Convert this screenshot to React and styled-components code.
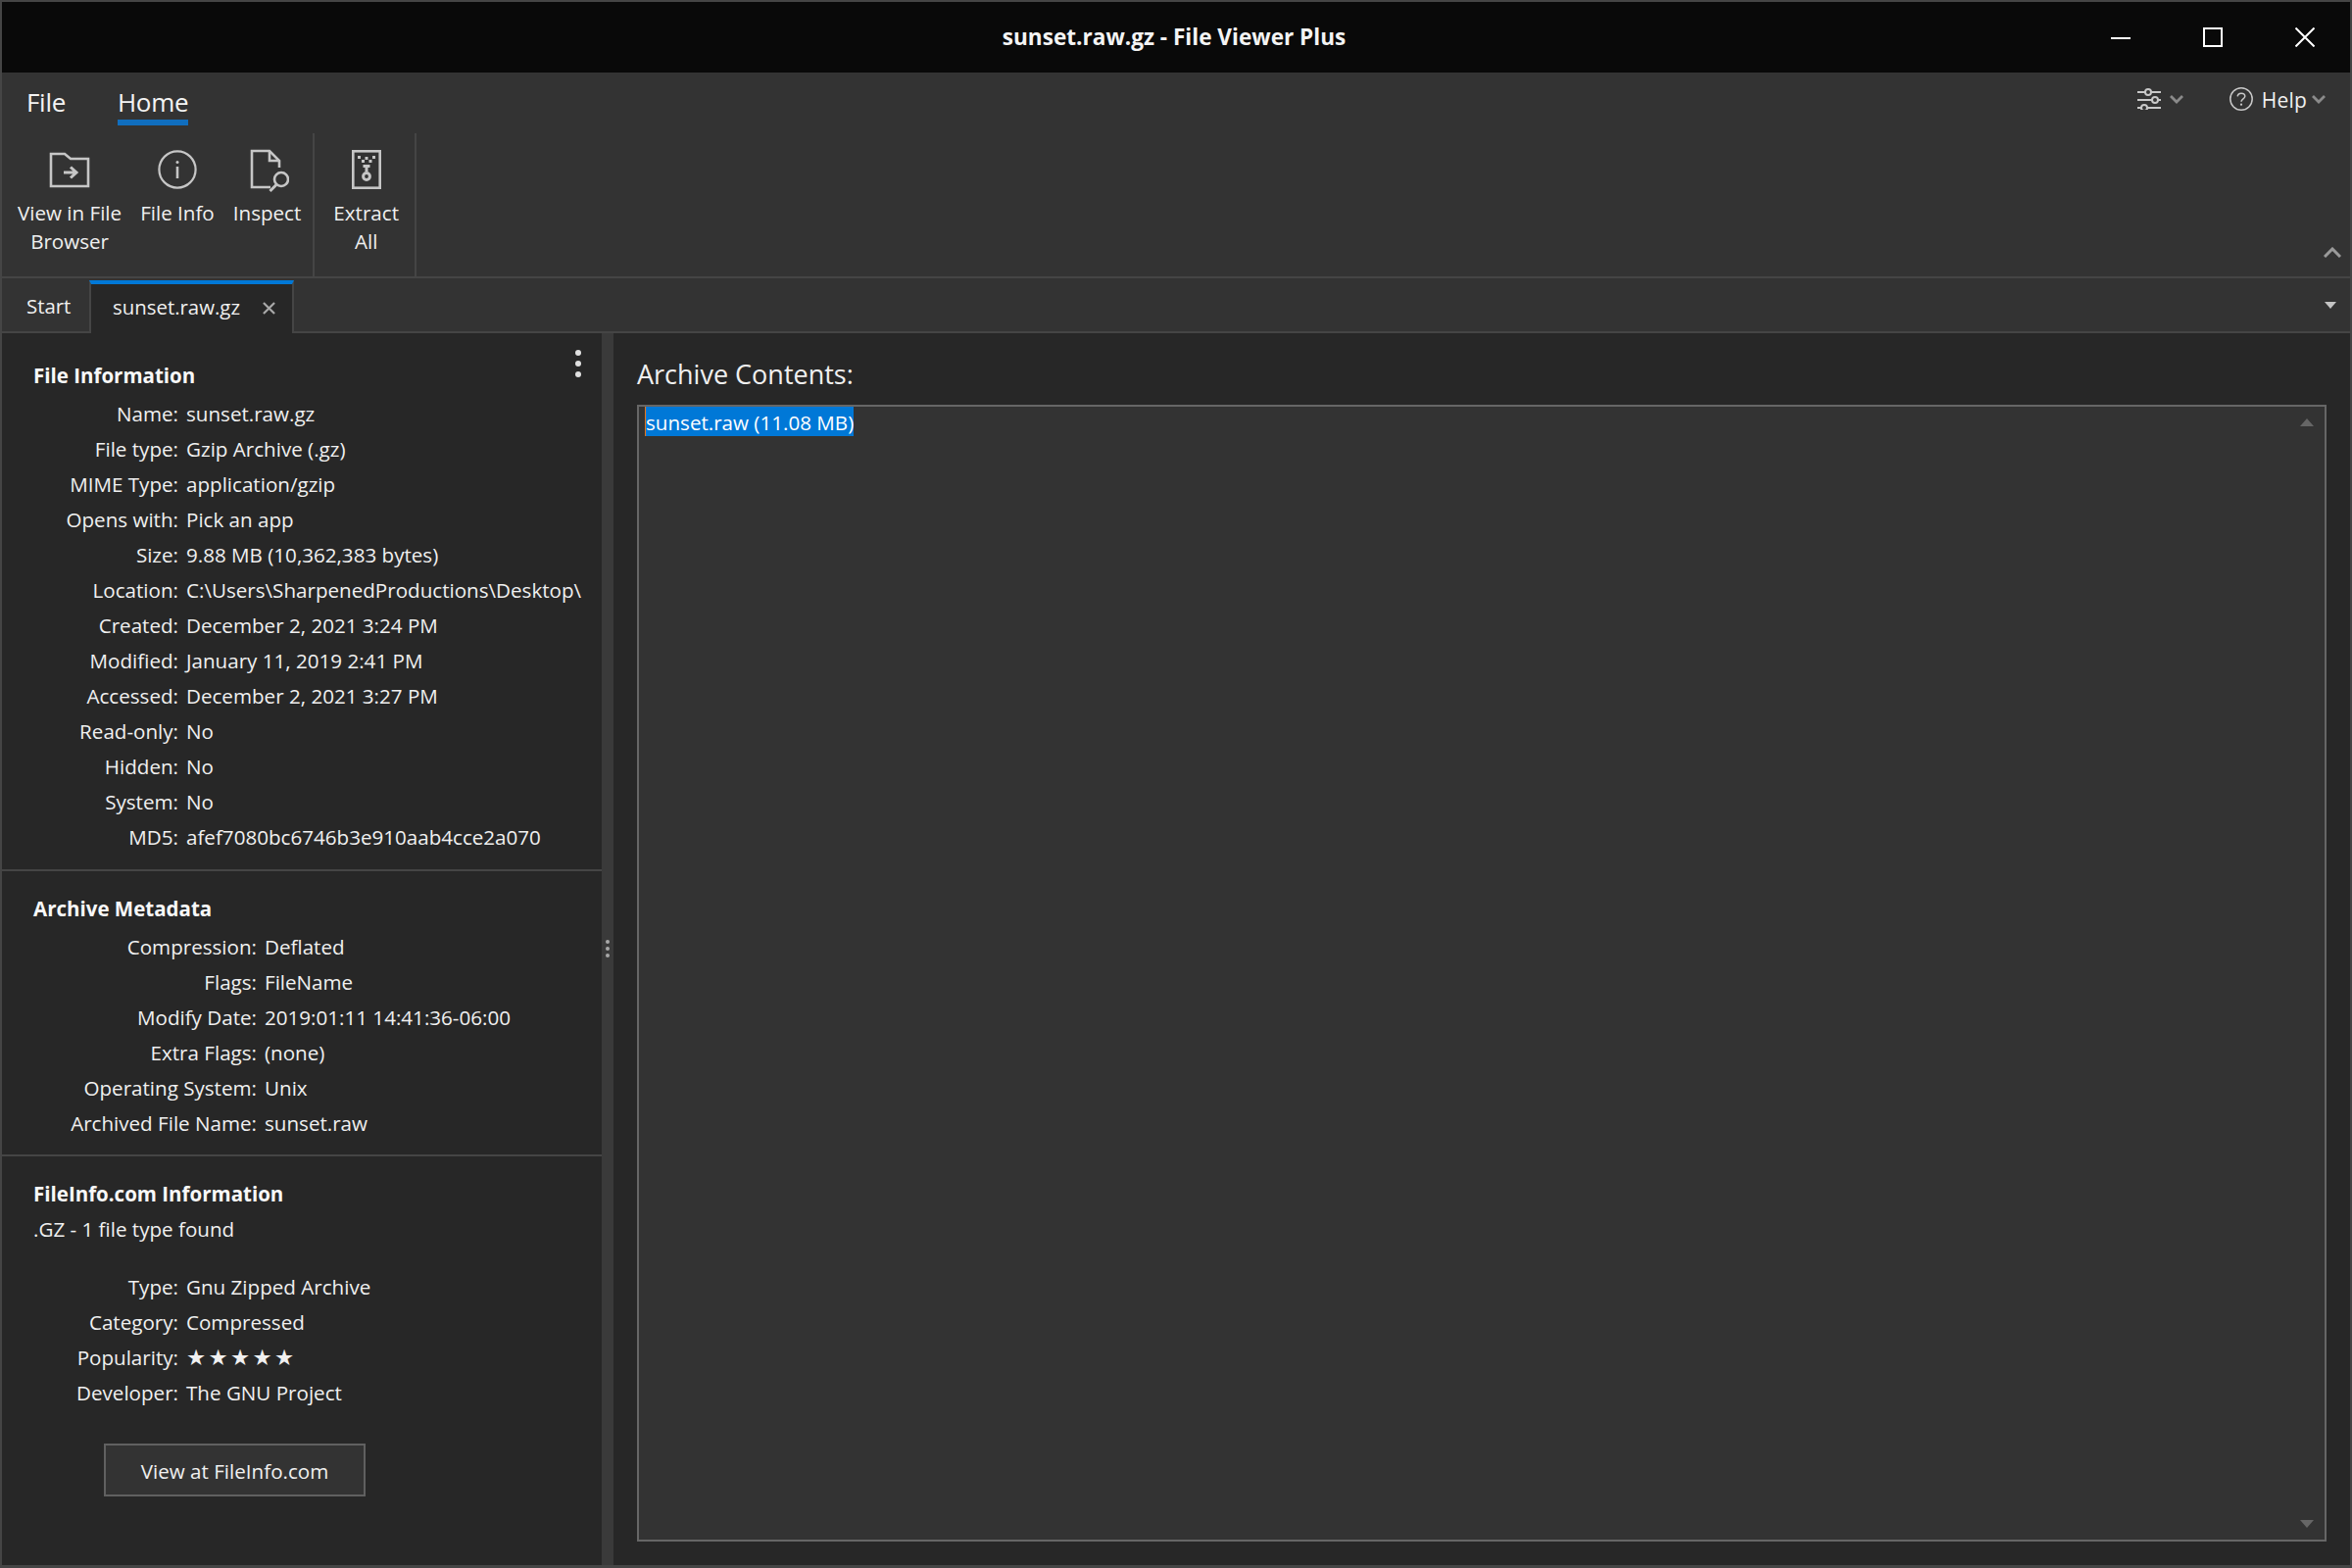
import styled, { createGlobalStyle } from 'styled-components';

const GlobalStyle = createGlobalStyle`
    html, body {
        margin: 0;
        padding: 0;
        background: #333;
    }
    body {
        font-family: "Open Sans", "Noto Sans", sans-serif;
        color: #f0f0f0;
    }
`

const fileRows = [
    ['Name:', 'sunset.raw.gz'],
    ['File type:', 'Gzip Archive (.gz)'],
    ['MIME Type:', 'application/gzip'],
    ['Opens with:', 'Pick an app'],
    ['Size:', '9.88 MB (10,362,383 bytes)'],
    ['Location:', 'C:\\Users\\SharpenedProductions\\Desktop\\'],
    ['Created:', 'December 2, 2021 3:24 PM'],
    ['Modified:', 'January 11, 2019 2:41 PM'],
    ['Accessed:', 'December 2, 2021 3:27 PM'],
    ['Read-only:', 'No'],
    ['Hidden:', 'No'],
    ['System:', 'No'],
    ['MD5:', 'afef7080bc6746b3e910aab4cce2a070'],
]

const metaRows = [
    ['Compression:', 'Deflated'],
    ['Flags:', 'FileName'],
    ['Modify Date:', '2019:01:11 14:41:36-06:00'],
    ['Extra Flags:', '(none)'],
    ['Operating System:', 'Unix'],
    ['Archived File Name:', 'sunset.raw'],
]

const FolderIcon = () => (
    <svg width="44" height="48" viewBox="0 0 44 48" fill="none" stroke="#c6c6c6" strokeWidth="2.6">
        <path d="M3 7H17L23 12H41V40H3Z" />
        <path d="M16 26H28M23 20.5L29 26L23 31.5" strokeWidth="3" />
    </svg>
)

const InfoIcon = () => (
    <svg width="44" height="48" viewBox="0 0 44 48" fill="none" stroke="#c6c6c6" strokeWidth="2.2">
        <circle cx="22" cy="23" r="18.6" />
        <path d="M22 20V32" strokeWidth="2.6" />
        <circle cx="22" cy="15.5" r="1.5" fill="#c6c6c6" stroke="none" />
    </svg>
)

const InspectIcon = () => (
    <svg width="44" height="48" viewBox="-4 0 44 48" fill="none" stroke="#c6c6c6" strokeWidth="2.6">
        <path d="M30 21V14L20 4H2V41H21" />
        <path d="M20 4V14H30" />
        <circle cx="32" cy="33" r="7" />
        <path d="M27 38.5L20.5 45" strokeWidth="3" />
    </svg>
)

const ExtractIcon = () => (
    <svg width="34" height="48" viewBox="0 0 34 48" fill="none" stroke="#c6c6c6" strokeWidth="2.6">
        <rect x="3.3" y="4.3" width="27.4" height="37.4" />
        <g fill="#c6c6c6" stroke="none">
            <rect x="8" y="9" width="3" height="3" />
            <rect x="23" y="9" width="3" height="3" />
            <rect x="15.5" y="10" width="3" height="3" />
            <rect x="12" y="13" width="3" height="3" />
            <rect x="19.5" y="13" width="3" height="3" />
            <rect x="13.5" y="18" width="7" height="3" />
            <rect x="15.5" y="21" width="3" height="4" />
        </g>
        <circle cx="17" cy="30" r="3.4" strokeWidth="3" />
    </svg>
)

const SettingsIcon = () => (
    <svg width="24" height="22" viewBox="0 0 24 22" fill="none" stroke="#c8c8c8" strokeWidth="2">
        <path d="M0 4H8M14 4H24M0 12H15M21 12H24M0 20H4M10 20H24" />
        <circle cx="11" cy="4" r="3" />
        <circle cx="18" cy="12" r="3" />
        <circle cx="7" cy="20" r="3" />
    </svg>
)

const HelpIcon = () => (
    <svg width="24" height="24" viewBox="0 0 24 24" fill="none" stroke="#c8c8c8" strokeWidth="1.5">
        <circle cx="12" cy="12" r="11.2" />
        <path d="M8.2 9.4C8.4 7.3 10 6.2 12 6.2C14.2 6.2 15.8 7.5 15.8 9.3C15.8 11.9 12 11.9 12 14.8" />
        <circle cx="12" cy="17.7" r="1.1" fill="#c8c8c8" stroke="none" />
    </svg>
)

const Chevron = () => (
    <svg width="14" height="9" viewBox="0 0 14 9" fill="none" stroke="#8a8a8a" strokeWidth="2.8">
        <path d="M1 1L7 7L13 1" />
    </svg>
)

const WindowIcon = ({ children }) => (
    <svg width="20" height="20" viewBox="0 0 20 20" fill="none" stroke="#fff" strokeWidth="2">
        {children}
    </svg>
)

const VerticalDots = ({ size, gap, fill }) => (
    <svg width={size + 2} height={gap * 2 + size + 2} fill={fill}>
        <circle cx={size / 2 + 1} cy={size / 2 + 1} r={size / 2} />
        <circle cx={size / 2 + 1} cy={size / 2 + 1 + gap} r={size / 2} />
        <circle cx={size / 2 + 1} cy={size / 2 + 1 + gap * 2} r={size / 2} />
    </svg>
)

const Triangle = ({ up, color, width, height }) => (
    <svg width={width} height={height} viewBox="0 0 14 8" preserveAspectRatio="none" fill={color}>
        <path d={up ? 'M0 8L7 0L14 8Z' : 'M0 0H14L7 8Z'} />
    </svg>
)

const InfoTable = ({ rows, labelWidth }) => (
    <>
        {rows.map(([label, value]) => (
            <Row key={label} $labelWidth={labelWidth}>
                <Label>{label}</Label>
                <span>{value}</span>
            </Row>
        ))}
    </>
)

const App = () => {

    const infoRows = [
        ['Type:', 'Gnu Zipped Archive'],
        ['Category:', 'Compressed'],
        ['Popularity:', <Stars>★★★★★</Stars>],
        ['Developer:', 'The GNU Project'],
    ]

    return (
        <>
            <GlobalStyle />
            <Frame>
                <TitleBar>
                    <TitleText>sunset.raw.gz - File Viewer Plus</TitleText>
                    <WindowControls>
                        <WindowIcon><path d="M0 11H20" /></WindowIcon>
                        <WindowIcon><rect x="1" y="1" width="18" height="18" /></WindowIcon>
                        <WindowIcon><path d="M0.5 0.5L19.5 19.5M19.5 0.5L0.5 19.5" /></WindowIcon>
                    </WindowControls>
                </TitleBar>

                <Ribbon>
                    <RibbonLeft>
                        <RibbonNav>
                            <NavItem>File</NavItem>
                            <NavItem $active>Home</NavItem>
                        </RibbonNav>
                        <ToolGroups>
                            <ToolGroup $left={6.5} $right={2}>
                                <ToolButton>
                                    <FolderIcon />
                                    <ToolLabel>View in File<br />Browser</ToolLabel>
                                </ToolButton>
                                <ToolButton>
                                    <InfoIcon />
                                    <ToolLabel>File Info</ToolLabel>
                                </ToolButton>
                                <ToolButton>
                                    <InspectIcon />
                                    <ToolLabel>Inspect</ToolLabel>
                                </ToolButton>
                            </ToolGroup>
                            <ToolGroup $left={10} $right={7}>
                                <ToolButton>
                                    <ExtractIcon />
                                    <ToolLabel>Extract<br />All</ToolLabel>
                                </ToolButton>
                            </ToolGroup>
                        </ToolGroups>
                    </RibbonLeft>
                    <RibbonRight>
                        <RibbonMenu>
                            <SettingsMenu>
                                <SettingsIcon />
                                <Chevron />
                            </SettingsMenu>
                            <HelpMenu>
                                <HelpIcon />
                                <HelpText>Help</HelpText>
                                <Chevron />
                            </HelpMenu>
                        </RibbonMenu>
                        <CollapseCaret viewBox="0 0 18 11" fill="none" stroke="#9a9a9a" strokeWidth="3">
                            <path d="M1 10L9 2L17 10" />
                        </CollapseCaret>
                    </RibbonRight>
                </Ribbon>

                <TabStrip>
                    <Tab>Start</Tab>
                    <Tab $active>
                        sunset.raw.gz
                        <CloseIcon viewBox="0 0 14 14" stroke="#a8a8a8" strokeWidth="2.4">
                            <path d="M1 1L13 13M13 1L1 13" />
                        </CloseIcon>
                    </Tab>
                    <TabStripEnd>
                        <Triangle color="#c4c4c4" width={12} height={7} />
                    </TabStripEnd>
                </TabStrip>

                <Body>
                    <SidePanel>
                        <Section $top={25} $bottom={14}>
                            <HeadingRow>
                                <Heading>File Information</Heading>
                                <PanelMenu>
                                    <VerticalDots size={6} gap={11} fill="#e0e0e0" />
                                </PanelMenu>
                            </HeadingRow>
                            <InfoTable rows={fileRows} labelWidth={148} />
                        </Section>
                        <Section $top={20} $bottom={13}>
                            <HeadingRow>
                                <Heading>Archive Metadata</Heading>
                            </HeadingRow>
                            <InfoTable rows={metaRows} labelWidth={228} />
                        </Section>
                        <LastSection>
                            <Heading>FileInfo.com Information</Heading>
                            <Found>.GZ - 1 file type found</Found>
                            <InfoTable rows={infoRows} labelWidth={148} />
                            <FileInfoButton>View at FileInfo.com</FileInfoButton>
                        </LastSection>
                    </SidePanel>

                    <Splitter>
                        <VerticalDots size={4} gap={7} fill="#a8a8a8" />
                    </Splitter>

                    <Content>
                        <ContentTitle>Archive Contents:</ContentTitle>
                        <ListBox>
                            <ListItem>sunset.raw (11.08 MB)</ListItem>
                            <ListScroll>
                                <Triangle up color="#666" width={14} height={8} />
                                <Triangle color="#666" width={14} height={8} />
                            </ListScroll>
                        </ListBox>
                    </Content>
                </Body>
            </Frame>
        </>
    )
}

export default App;


const Frame = styled.div`
    width: 2400px;
    height: 1600px;
    box-sizing: border-box;
    border: 2px solid #454545;
    border-bottom-width: 3px;
    display: flex;
    flex-direction: column;
    overflow: hidden;
`

const TitleBar = styled.div`
    height: 72px;
    flex: none;
    background: #090909;
    display: flex;
    align-items: center;
    justify-content: center;
    position: relative;
`

const TitleText = styled.div`
    font-size: 22.6px;
    font-weight: 700;
    color: #f4f4f4;
    margin: 0 4px 2px 0;
`

const WindowControls = styled.div`
    position: absolute;
    right: 36px;
    top: 26px;
    display: flex;
    gap: 74px;
`

const Ribbon = styled.div`
    height: 208px;
    flex: none;
    display: flex;
    justify-content: space-between;
    background: #333;
    border-bottom: 2px solid #454545;
    box-sizing: content-box;
`

const RibbonLeft = styled.div`
    display: flex;
    flex-direction: column;
`

const RibbonNav = styled.div`
    height: 62px;
    flex: none;
    display: flex;
    gap: 53px;
    padding-left: 25px;
`

const NavItem = styled.div`
    height: 54px;
    box-sizing: border-box;
    padding-top: 13px;
    line-height: 34px;
    font-size: 26px;
    letter-spacing: -0.3px;
    color: #f4f4f4;
    border-bottom: 6px solid ${props => props.$active ? '#106ebe' : 'transparent'};
`

const ToolGroups = styled.div`
    display: flex;
    flex: 1;
`

const ToolGroup = styled.div`
    display: flex;
    padding: 0 ${props => props.$right}px 0 ${props => props.$left}px;
    border-right: 2px solid #454545;
`

const ToolButton = styled.div`
    display: flex;
    flex-direction: column;
    align-items: center;
    padding: 14px 9.5px 0;
`

const ToolLabel = styled.div`
    margin-top: 5px;
    font-size: 20.6px;
    line-height: 29px;
    text-align: center;
    color: #f0f0f0;
    white-space: nowrap;
`

const RibbonRight = styled.div`
    display: flex;
    flex-direction: column;
    justify-content: space-between;
    align-items: flex-end;
    padding: 14px 9px 19px 0;
`

const RibbonMenu = styled.div`
    display: flex;
    align-items: center;
    gap: 47px;
    height: 26px;
    padding-right: 16px;
`

const SettingsMenu = styled.div`
    display: flex;
    align-items: center;
    gap: 9px;
`

const HelpMenu = styled.div`
    display: flex;
    align-items: center;
    gap: 8px;
`

const HelpText = styled.span`
    font-size: 21px;
    letter-spacing: 0.2px;
    padding: 2px 0 0 1px;
    margin-right: -3px;
`

const CollapseCaret = styled.svg`
    width: 18px;
    height: 11px;
`

const TabStrip = styled.div`
    height: 54px;
    flex: none;
    display: flex;
    background: #333;
    border-bottom: 2px solid #454545;
    box-sizing: content-box;
`

const Tab = styled.div`
    display: flex;
    align-items: center;
    box-sizing: border-box;
    font-size: 20.4px;
    color: #f0f0f0;
    ${props => props.$active ? `
        width: 209px;
        height: 56px;
        margin-top: 2px;
        padding: 0 0 6px 22px;
        justify-content: space-between;
        background: #272727;
        border-top: 4px solid #0078d7;
        border-left: 2px solid #454545;
        border-right: 2px solid #454545;
    ` : `
        width: 89px;
        padding: 1px 0 0 25px;
    `}
`

const CloseIcon = styled.svg`
    width: 13px;
    height: 13px;
    margin-right: 17px;
    margin-top: 2px;
`

const TabStripEnd = styled.div`
    flex: 1;
    display: flex;
    align-items: center;
    justify-content: flex-end;
    padding-right: 14px;
`

const Body = styled.div`
    flex: 1;
    min-height: 0;
    display: flex;
    background: #272727;
`

const SidePanel = styled.div`
    width: 612px;
    flex: none;
    display: flex;
    flex-direction: column;
`

const Section = styled.div`
    padding: ${props => props.$top}px 0 ${props => props.$bottom}px 32px;
    border-bottom: 2px solid #454545;
`

const LastSection = styled.div`
    padding: 20px 0 0 32px;
`

const HeadingRow = styled.div`
    display: flex;
    justify-content: space-between;
    margin-bottom: 4px;
`

const Heading = styled.div`
    font-size: 20.5px;
    font-weight: 700;
    line-height: 36px;
    color: #f8f8f8;
`

const PanelMenu = styled.div`
    height: 36px;
    margin-top: -9px;
    margin-right: 20px;
`

const Row = styled.div`
    display: grid;
    grid-template-columns: ${props => props.$labelWidth}px 1fr;
    column-gap: 8px;
    height: 36px;
    line-height: 34px;
    font-size: 20.6px;
    color: #f0f0f0;
    white-space: nowrap;
`

const Label = styled.span`
    text-align: right;
`

const Stars = styled.span`
    font-family: "DejaVu Sans", sans-serif;
    font-size: 22.5px;
    letter-spacing: 2.3px;
    line-height: 30px;
`

const Found = styled.div`
    font-size: 20.6px;
    line-height: 36px;
    margin-bottom: 24px;
`

const FileInfoButton = styled.div`
    width: 267px;
    height: 54px;
    margin: 33px 0 0 72px;
    padding-top: 2px;
    box-sizing: border-box;
    display: flex;
    align-items: center;
    justify-content: center;
    background: #333;
    border: 2px solid #606060;
    font-size: 20.6px;
`

const Splitter = styled.div`
    width: 12px;
    flex: none;
    padding-bottom: 2px;
    background: #3a3a3a;
    display: flex;
    align-items: center;
    justify-content: center;
`

const Content = styled.div`
    flex: 1;
    min-width: 0;
    display: flex;
    flex-direction: column;
    padding: 22px 24px 24px 24px;
`

const ContentTitle = styled.div`
    height: 40px;
    line-height: 40px;
    margin-bottom: 11px;
    font-size: 27px;
    color: #f0f0f0;
`

const ListBox = styled.div`
    flex: 1;
    min-height: 0;
    position: relative;
    background: #333;
    border: 2px solid #666;
    padding: 0 0 0 6px;
`

const ListItem = styled.div`
    display: inline-block;
    height: 30px;
    line-height: 32px;
    background: #0078d7;
    border-left: 1px solid #e8761a;
    color: #fff;
    font-size: 20.6px;
`

const ListScroll = styled.div`
    position: absolute;
    top: 12px;
    bottom: 12px;
    right: 11px;
    display: flex;
    flex-direction: column;
    justify-content: space-between;
`
